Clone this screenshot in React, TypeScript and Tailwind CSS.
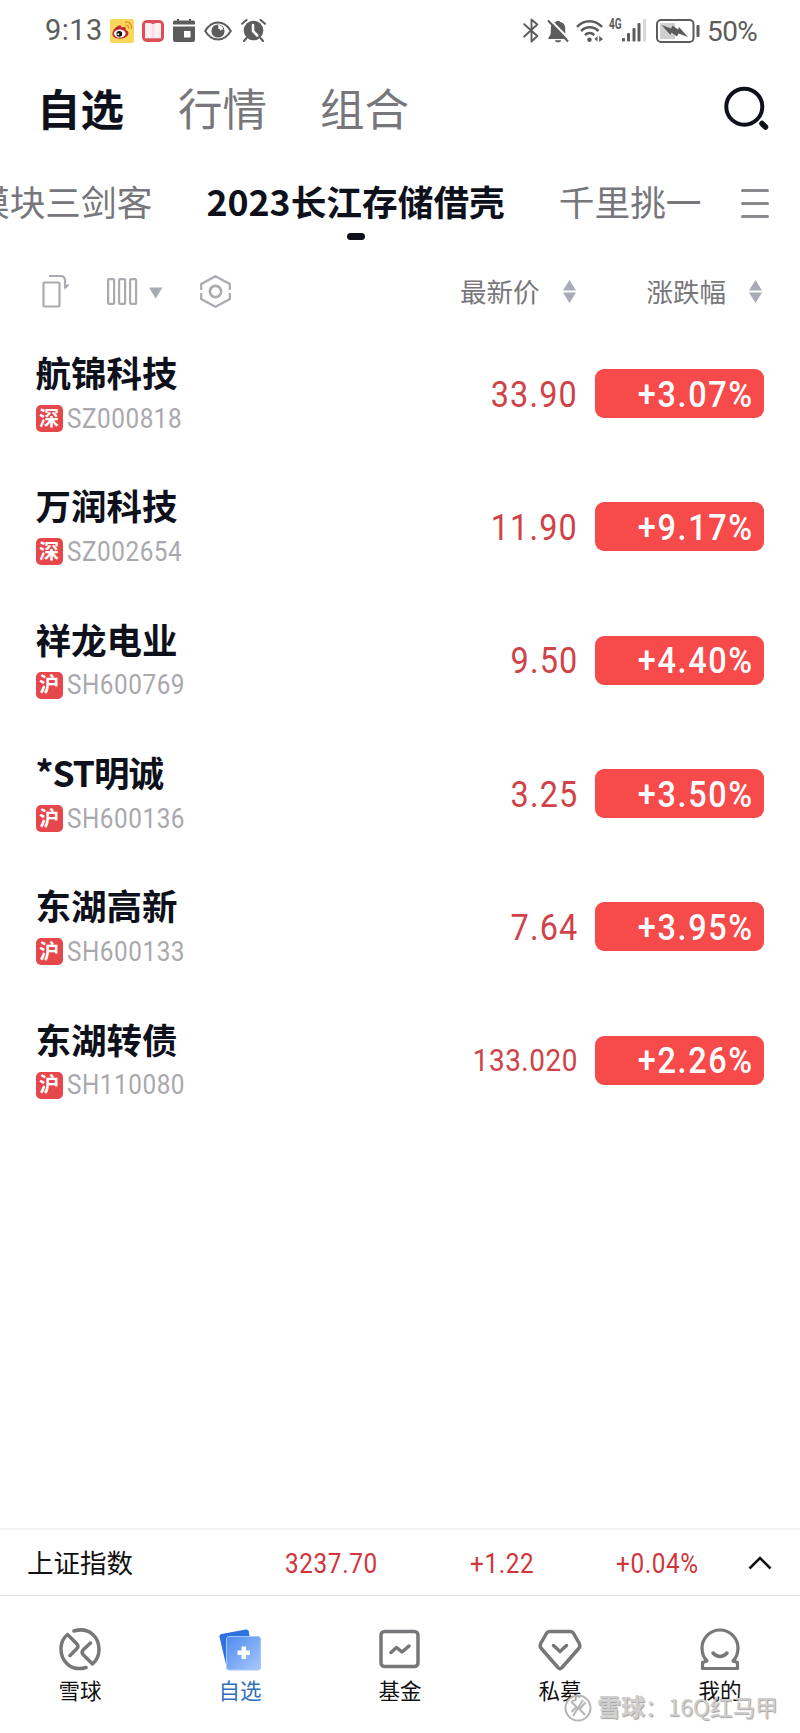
import React from 'react';

type Stock = {
  name: string;
  market: '深' | '沪';
  code: string;
  price: string;
  change: string;
};

const stocks: Stock[] = [
  { name: '航锦科技', market: '深', code: 'SZ000818', price: '33.90', change: '+3.07%' },
  { name: '万润科技', market: '深', code: 'SZ002654', price: '11.90', change: '+9.17%' },
  { name: '祥龙电业', market: '沪', code: 'SH600769', price: '9.50', change: '+4.40%' },
  { name: '*ST明诚', market: '沪', code: 'SH600136', price: '3.25', change: '+3.50%' },
  { name: '东湖高新', market: '沪', code: 'SH600133', price: '7.64', change: '+3.95%' },
  { name: '东湖转债', market: '沪', code: 'SH110080', price: '133.020', change: '+2.26%' },
];

function StatusBar() {
  return (
    <div className="flex h-[61px] shrink-0 items-center pl-[45px] text-[#5c5c5c]">
      <span className="w-[65px] pt-[1px] font-['Roboto'] text-[29px] tracking-[0.500px]">9:13</span>

      {/* weibo */}
      <svg width="24" height="24" viewBox="0 0 24 24">
        <rect width="24" height="24" rx="2" fill="#f9d65c" />
        <path d="M2.500 15c0-4 4-8 7-8.500 1.500-.3 2 .8 1.700 2 2-.8 4.500-.8 4.600 1.300 0 .7-.3 1.200-.3 1.200 1.800.5 3 1.600 3 3.300 0 3-4 5.400-8.500 5.400S2.500 18 2.500 15z" fill="#c3262c" />
        <ellipse cx="9.800" cy="14.600" rx="5.800" ry="4" fill="#fff" />
        <circle cx="9.300" cy="14.800" r="2.900" fill="#111" />
        <circle cx="8.300" cy="15.300" r="1" fill="#fff" />
        <path d="M15.500 3.200c4-.6 6.700 2.600 5.900 6.300M16 6.500c2-.3 3 1 2.600 2.700" fill="none" stroke="#e29a2c" strokeWidth="1.500" strokeLinecap="round" />
      </svg>
      {/* book */}
      <svg className="ml-2" width="22" height="22" viewBox="0 0 22 22">
        <rect width="22" height="22" rx="5" fill="#dd4f58" />
        <path d="M3 3.500c3-.8 6-.6 8 .8 2-1.400 5-1.600 8-.8v14.700H3z" fill="#fdeef1" />
        <path d="M11 4.300v14" stroke="#f3c6cc" strokeWidth="1" />
      </svg>
      {/* calendar */}
      <svg className="ml-[9px]" width="22" height="23" viewBox="0 0 22 23" fill="currentColor">
        <path d="M0 3a1.500 1.500 0 0 1 1.500-1.500H4V0h2v1.500h10V0h2v1.500h2.500A1.500 1.500 0 0 1 22 3v2.500H0z" />
        <path fillRule="evenodd" d="M0 7.500h22V21a2 2 0 0 1-2 2H2a2 2 0 0 1-2-2zM11 12v6.500h6.500V12z" />
      </svg>
      {/* eye */}
      <svg className="ml-[9px]" width="28" height="20" viewBox="0 0 28 20">
        <path d="M1.200 10C4.500 4.500 9 1.500 14 1.500S23.500 4.500 26.800 10C23.500 15.500 19 18.500 14 18.500S4.500 15.500 1.200 10z" fill="none" stroke="currentColor" strokeWidth="2" />
        <circle cx="14" cy="10" r="6.600" fill="currentColor" />
        <path d="M13 3.800c1.800 1 1.800 2.500 1 4 1.500-.3 2.500.5 2.300 2.200.9-1.200 1.800-1.700 3-1.500-.3-2.500-2-4.500-6.300-4.700z" fill="#fff" />
      </svg>
      {/* alarm */}
      <svg className="ml-[9px]" width="25" height="23" viewBox="0 0 25 23">
        <circle cx="12.500" cy="11.500" r="9.800" fill="currentColor" />
        <path d="M1 4.800 5.500 1M24 4.800 19.500 1M5.500 19 3 22M19.500 19l2.500 3" stroke="currentColor" strokeWidth="2" strokeLinecap="round" />
        <path d="M12 6v6l4.200 4.500" fill="none" stroke="#fff" strokeWidth="2.600" strokeLinecap="round" strokeLinejoin="round" />
      </svg>

      {/* bluetooth */}
      <svg className="ml-[257px]" width="16" height="25" viewBox="0 0 16 25" fill="none" stroke="currentColor" strokeWidth="1.900" strokeLinejoin="round" strokeLinecap="round">
        <path d="M1.200 6.200 14.300 18 8.500 23.500V1.500l5.800 5L1.200 18.500" />
      </svg>
      {/* muted bell */}
      <svg className="ml-[8px]" width="22" height="24" viewBox="0 0 22 24">
        <path d="M1.500 20v-1.500c1.500-1.500 2.300-3 2.300-5.500V9c0-3 2-5.500 5-6a2.300 1.800 0 0 1 4.400 0c3 .5 5 3 5 6v4c0 2.500.8 4 2.300 5.500V20z" fill="currentColor" />
        <path d="M8 21.300h6a3 2 0 0 1-6 0z" fill="currentColor" />
        <path d="M3 .5 23.500 21.500" stroke="#fff" strokeWidth="2" />
        <path d="M1 1.500 21 22.500" stroke="currentColor" strokeWidth="2" />
      </svg>
      {/* wifi */}
      <svg className="ml-[7px]" width="28" height="24" viewBox="0 0 28 24" fill="none" stroke="currentColor" strokeWidth="2.500">
        <path d="M1 7.800C8 .3 19 .3 26 7.800M5 12c5-5 12.500-5 17.500 0M9 16.200c2.800-2.800 6.500-2.800 9.300 0" />
        <circle cx="13.500" cy="20.800" r="2.200" fill="currentColor" stroke="none" />
        <path d="M18.500 20 21.500 17v5.500zM27 20l-3.800 3v-6z" fill="currentColor" stroke="none" />
      </svg>
      <span className="ml-[5px] w-[13px] self-start pt-[17px] font-['Roboto'] text-[14px] font-bold leading-[14px]">
        <span className="inline-block origin-left scale-x-[0.720]">4G</span>
      </span>
      {/* cell signal */}
      <svg width="24" height="23" viewBox="0 0 24 23" fill="currentColor">
        <rect x="0" y="19" width="3" height="3.500" rx="1" />
        <rect x="5" y="14" width="3" height="8.500" rx="1" />
        <rect x="10.500" y="9" width="3" height="13.500" rx="1" />
        <rect x="15.500" y="4" width="3" height="18.500" rx="1" />
        <rect x="21" y="0" width="3" height="22.500" fill="#d9d9d9" />
      </svg>
      {/* battery */}
      <svg className="ml-[10px]" width="44" height="24" viewBox="0 0 44 24">
        <rect x="1" y="1" width="36.500" height="22" rx="4" fill="none" stroke="currentColor" strokeWidth="2" />
        <rect x="4" y="4" width="15" height="16" fill="#d0d0d0" />
        <path d="M5.500 6 15 9.500l1.500-3 5.500 4 1-2.500L32 18l-9.500-3.500-1.500 3-5.500-4-1 2.500z" fill="currentColor" />
        <rect x="40.500" y="6" width="3" height="12" rx="1" fill="currentColor" />
      </svg>
      <span className="ml-[7px] pt-[2px] font-['Roboto'] text-[28px] tracking-[-0.600px]">50%</span>
    </div>
  );
}

function Header() {
  return (
    <div className="flex h-[96px] shrink-0 items-center pl-[37px] text-[44.500px] text-[#77777b]">
      <span className="-mt-[3px] text-[43.500px] font-bold text-[#0e111b]">自选</span>
      <span className="-mt-[3px] ml-[54px]">行情</span>
      <span className="-mt-[3px] ml-[53px]">组合</span>
      <svg className="ml-auto mr-[31px]" width="45" height="46" viewBox="0 0 45 46" fill="none" stroke="#0e111b">
        <circle cx="20.300" cy="20.700" r="18" strokeWidth="4" />
        <path d="m38 37.500 3.500 3.500" strokeWidth="5.500" strokeLinecap="round" />
      </svg>
    </div>
  );
}

function GroupTabs() {
  return (
    <div className="flex h-[90px] shrink-0 items-center text-[35.700px] text-[#77777b]">
      <div className="flex h-[90px] w-[720px] items-center gap-[54px] overflow-hidden whitespace-nowrap pb-[2px]">
        <span className="-ml-[26px]">模块三剑客</span>
        <span className="relative font-bold text-[#0e111b]">
          2023长江存储借壳
          <i className="absolute -bottom-[12px] left-1/2 h-[7px] w-[18px] -translate-x-1/2 rounded-full bg-[#0e111b]" />
        </span>
        <span>千里挑一</span>
      </div>
      <div className="ml-[21px] mt-[2px] flex w-[28px] flex-col gap-[10px]">
        <i className="h-[3px] rounded-full bg-[#88888d]" />
        <i className="h-[3px] rounded-full bg-[#88888d]" />
        <i className="h-[3px] rounded-full bg-[#88888d]" />
      </div>
    </div>
  );
}

function SortIcon() {
  return (
    <svg width="13" height="23" viewBox="0 0 13 23" fill="#a9abb6">
      <path d="M6.500 0 13 10.500H0zM6.500 23 0 12.500h13z" />
    </svg>
  );
}

function Toolbar() {
  return (
    <div className="flex h-[80px] shrink-0 items-center pl-[42px] pt-[8px] text-[26.500px] text-[#77777b]">
      {/* rotate screen */}
      <svg width="28" height="34" viewBox="0 0 28 34" fill="none" stroke="#a9abb0" strokeWidth="2.200">
        <rect x="1.500" y="8.500" width="16" height="24" rx="1" />
        <path d="M7 2h11.500c3 0 4.500 1.500 4.500 4.500V14" />
        <path d="M22.500 10.500H28L22.500 16z" fill="#a9abb0" stroke="none" />
      </svg>
      {/* column picker */}
      <svg className="ml-[37px]" width="56" height="27" viewBox="0 0 56 27" fill="none" stroke="#a9abb0" strokeWidth="2.200">
        <rect x="1.100" y="1.100" width="6" height="24.800" rx="1" />
        <rect x="12.100" y="1.100" width="6" height="24.800" rx="1" />
        <rect x="23.100" y="1.100" width="6" height="24.800" rx="1" />
        <path d="M42 9.500h13.500L48.700 20.500z" fill="#a9abb6" stroke="none" />
      </svg>
      {/* settings */}
      <svg className="ml-[37px]" width="31" height="33" viewBox="0 0 31 33" fill="none" stroke="#a9abb0" strokeWidth="2.200">
        <path d="M1.200 15V9L15.500 1.200 29.800 9v6M29.800 18v6L15.500 31.800 1.200 24v-6" />
        <circle cx="15.500" cy="16.500" r="5.600" strokeWidth="2.600" />
      </svg>
      <span className="ml-auto mr-[23px]">最新价</span>
      <SortIcon />
      <span className="ml-[71px] mr-[23px]">涨跌幅</span>
      <SortIcon />
      <span className="w-[38px]" />
    </div>
  );
}

function StockRow({ stock }: { stock: Stock }) {
  const longPrice = stock.price.length > 6;
  const specialTreatment = stock.name.startsWith('*');
  return (
    <div className="flex h-[133.300px] items-center pl-[35.500px] pr-[36px]">
      <div className="flex flex-1 flex-col pb-[5px]">
        <div className={`text-[35.500px] font-bold leading-[44px] text-[#0e111b] ${specialTreatment ? 'tracking-[-1px]' : ''}`}>
          {stock.name}
        </div>
        <div className="mt-[11px] flex h-[27px] items-center">
          <span className="flex h-[27px] w-[27px] items-center justify-center rounded-[5px] bg-[#e5474b] pb-[2px] text-[20px] font-bold leading-[20px] text-white">
            {stock.market}
          </span>
          <span className="ml-[4px] origin-left scale-x-[0.900] pt-[1px] font-['Roboto'] text-[27px] leading-[27px] tracking-[0.600px] text-[#a9a9ad]">
            {stock.code}
          </span>
        </div>
      </div>
      <span
        className={`mr-[17px] origin-right scale-x-[0.900] pt-[2px] font-['Roboto'] text-[#cf4348] ${
          longPrice ? 'text-[31px] tracking-[0.600px]' : 'text-[36px] tracking-[1.300px]'
        }`}
      >
        {stock.price}
      </span>
      <span className="flex h-[49px] w-[169px] items-center justify-end rounded-[9px] bg-[#f64a4b] pr-[10px] pt-[2px] font-['Roboto'] text-[36px] font-medium text-white">
        <span className="origin-right scale-x-[0.900] tracking-[1.800px]">{stock.change}</span>
      </span>
    </div>
  );
}

function IndexBar() {
  return (
    <div className="flex h-[68px] shrink-0 items-center border-b border-t-2 border-b-[#e3e3e3] border-t-[#f3f3f3] pl-[27px] font-['Roboto'] text-[27px] tracking-[0.700px] text-[#cf363c]">
      <span className="w-[258px] pb-[2px] font-['Noto_Sans_CJK_SC'] text-[26.500px] tracking-normal text-[#111]">上证指数</span>
      <span className="w-[185px] origin-left scale-x-[0.900] pt-[4px]">3237.70</span>
      <span className="w-[146px] origin-left scale-x-[0.900] pt-[4px]">+1.22</span>
      <span className="w-[132px] origin-left scale-x-[0.900] pt-[4px]">+0.04%</span>
      <svg width="24" height="14" viewBox="0 0 24 14" fill="none" stroke="#111" strokeWidth="2.500">
        <path d="M1.500 12.500 12 2l10.500 10.500" />
      </svg>
    </div>
  );
}

function NavItem({ label, active, children }: { label: string; active?: boolean; children: React.ReactNode }) {
  return (
    <div className="flex flex-1 flex-col items-center pt-[31px]">
      <svg width="44" height="44" viewBox="0 0 44 44" fill="none" stroke="#77777b" strokeWidth="3.500" strokeLinecap="round" strokeLinejoin="round">
        {children}
      </svg>
      <span className={`mt-[4px] text-[21.500px] leading-[30px] ${active ? 'text-[#2f6fbd]' : 'text-[#111]'}`}>{label}</span>
    </div>
  );
}

function BottomNav() {
  return (
    <div className="flex h-[137px] shrink-0">
      <NavItem label="雪球">
        <path d="M16 4C31 -.5 41.500 10 41 23.500c-.3 5.500-2.500 10-6.500 13.500L25.500 28c-2-2-2-3.500 0-5.500l7-6.500" />
        <path d="M28 40.500C13 45 2.500 34 3 21c.2-6 2.800-10.500 6.500-13.500L18.500 16.500c2 2 2 3.500 0 5.500L12 28.500" />
      </NavItem>
      <NavItem label="自选" active>
        <defs>
          <linearGradient id="card" x1="0" y1="0" x2="1" y2="1">
            <stop offset="0" stopColor="#4f8cf0" />
            <stop offset="1" stopColor="#a9c8fb" />
          </linearGradient>
        </defs>
        <path d="M3.500 7 28 2.500c1.500-.2 2.500.5 2.800 2L35 31 8 37.500 1.500 10c-.3-1.500.5-2.700 2-3z" fill="#2e72df" stroke="none" />
        <rect x="8.500" y="9.500" width="34" height="33.500" rx="2.500" fill="url(#card)" stroke="#a5c6ff" strokeWidth="1" />
        <path d="M25.800 19.500v12.500M19.500 25.800h12.500" stroke="#fff" strokeWidth="4.500" strokeLinecap="butt" />
      </NavItem>
      <NavItem label="基金">
        <rect x="3" y="4.500" width="37" height="35" rx="3.500" />
        <path d="m13 25.500 5.500-5 5.500 4.500 7-6" strokeWidth="3.500" />
      </NavItem>
      <NavItem label="私募">
        <path d="M11.500 4.500h21c1.300 0 2 .5 2.800 1.500L41 16c1.300 2.300 1.300 3.800-.3 5.500L24 40.500c-1.500 1.500-2.500 1.500-4 0L3.300 21.500C1.700 19.800 1.700 18.300 3 16L8.700 6C9.500 5 10.200 4.500 11.500 4.500z" />
        <path d="m15.500 18.500 6.500 6 6.500-6" />
      </NavItem>
      <NavItem label="我的">
        <path d="M9 34C5.500 30.500 4 26.500 4 21a18 18 0 0 1 36 0c0 5.500-1.500 9.500-5 13l4.500 1.500v6H4.500v-6z" strokeWidth="3.200" />
        <path d="M15 26c4 4.500 10 4.500 14 0" />
      </NavItem>
    </div>
  );
}

function Watermark() {
  return (
    <div className="absolute left-[564px] top-[1694px] flex items-center text-[#cfcfcf] [text-shadow:1px_1px_1px_#a0a0a0]">
      <svg width="28" height="28" viewBox="0 0 28 28" fill="none" stroke="#b5b5b5" strokeWidth="2">
        <circle cx="14" cy="14" r="12.500" fill="#ffffff99" />
        <path d="M7 7.500 12.500 13l-5 5M21 21l-5.500-6 6-6.500M19 6 9 22" />
      </svg>
      <span className="-mt-[3px] ml-[5px] whitespace-nowrap text-[22.700px] leading-[28px]">
        <b className="text-[24px] font-bold">雪球</b>：16Q红马甲
      </span>
    </div>
  );
}

export default function App() {
  return (
    <div className="relative flex h-[1733px] w-[800px] flex-col overflow-hidden bg-white font-['Noto_Sans_CJK_SC',sans-serif]">
      <StatusBar />
      <Header />
      <GroupTabs />
      <Toolbar />
      <div className="flex-1">
        {stocks.map((stock) => (
          <StockRow key={stock.code} stock={stock} />
        ))}
      </div>
      <IndexBar />
      <BottomNav />
      <Watermark />
    </div>
  );
}
